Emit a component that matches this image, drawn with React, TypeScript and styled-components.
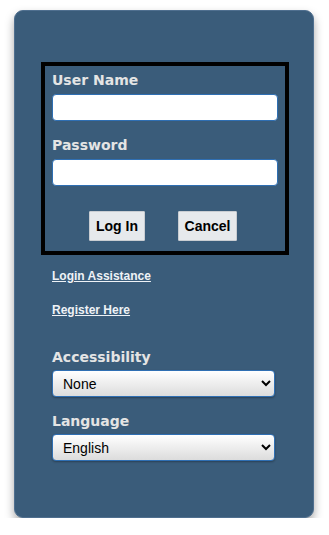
import React from "react";
import styled, { createGlobalStyle } from "styled-components";

const Global = createGlobalStyle`
  html, body { margin: 0; padding: 0; background: #ffffff; }
  body { font-family: "Liberation Sans", Arial, sans-serif; }
`;

const Panel = styled.div`
  box-sizing: border-box;
  margin: 10px 0 0 14px;
  width: 300px;
  height: 508px;
  background: #3a5c7a;
  border-radius: 9px;
  border: 1px solid #4f6f8f;
  box-shadow: 0 5px 10px rgba(0, 0, 0, 0.35);
  padding: 51px 0 0 26px;
`;

const LoginBox = styled.form`
  box-sizing: border-box;
  width: 248px;
  border: 4px solid #000;
  padding: 5px 7px 10px 7px;
  margin: 0;
`;

const FieldLabel = styled.label<{ $top?: number }>`
  display: block;
  font-family: "DejaVu Sans", Verdana, sans-serif;
  font-weight: bold;
  font-size: 14px;
  line-height: 18px;
  color: #e4e4e4;
  margin-top: ${(p) => p.$top ?? 0}px;
  margin-bottom: 5px;
`;

const TextInput = styled.input`
  box-sizing: border-box;
  display: block;
  width: 226px;
  height: 27px;
  border: 1px solid #2f6fb3;
  border-radius: 4px;
  background: #fff;
  margin: 0;
`;

const ButtonRow = styled.div`
  display: flex;
  gap: 33px;
  margin-top: 25px;
  padding-left: 37px;
`;

const Btn = styled.button<{ $w: number }>`
  box-sizing: border-box;
  width: ${(p) => p.$w}px;
  height: 30px;
  background: #e6e9ec;
  border: 1px solid #c9cdd2;
  border-radius: 1px;
  font-family: "Liberation Sans", Arial, sans-serif;
  font-weight: bold;
  font-size: 14px;
  color: #000;
  padding: 0;
`;

const Below = styled.div`
  padding-left: 11px;
`;

const LinkItem = styled.a<{ $top: number }>`
  display: block;
  width: max-content;
  margin-top: ${(p) => p.$top}px;
  font-family: "Liberation Sans", Arial, sans-serif;
  font-weight: bold;
  font-size: 12px;
  line-height: 14px;
  color: #eef2f6;
  text-decoration: underline;
`;

const SectionLabel = styled.div<{ $top: number }>`
  font-family: "DejaVu Sans", Verdana, sans-serif;
  font-weight: bold;
  font-size: 14px;
  line-height: 18px;
  color: #e4e4e4;
  margin-top: ${(p) => p.$top}px;
  margin-bottom: 4px;
`;

const Select = styled.select`
  box-sizing: border-box;
  display: block;
  width: 223px;
  height: 27px;
  border: 1px solid #2f6fb3;
  border-radius: 4px;
  background: linear-gradient(#ffffff, #dcdcdc);
  box-shadow: 0 1px 2px rgba(0, 0, 0, 0.3);
  font-family: "Liberation Sans", Arial, sans-serif;
  font-size: 14px;
  color: #000;
  padding: 0 6px;
`;

export default function App() {
  return (
    <>
      <Global />
      <Panel>
        <LoginBox onSubmit={(e) => e.preventDefault()}>
          <FieldLabel htmlFor="user">User Name</FieldLabel>
          <TextInput id="user" type="text" />
          <FieldLabel htmlFor="pass" $top={15}>
            Password
          </FieldLabel>
          <TextInput id="pass" type="password" />
          <ButtonRow>
            <Btn $w={56} type="submit">Log In</Btn>
            <Btn $w={59} type="button">Cancel</Btn>
          </ButtonRow>
        </LoginBox>
        <Below>
          <LinkItem href="#" $top={14}>Login Assistance</LinkItem>
          <LinkItem href="#" $top={20}>Register Here</LinkItem>
          <SectionLabel $top={31}>Accessibility</SectionLabel>
          <Select defaultValue="None">
            <option>None</option>
          </Select>
          <SectionLabel $top={15}>Language</SectionLabel>
          <Select defaultValue="English">
            <option>English</option>
          </Select>
        </Below>
      </Panel>
    </>
  );
}
